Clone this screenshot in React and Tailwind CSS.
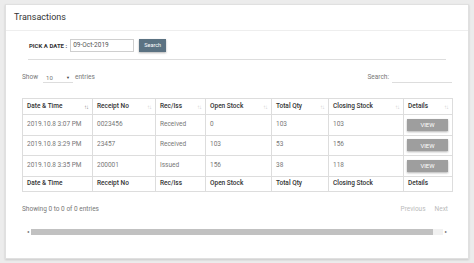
import React from "react";

const rows = [
  { dt: "2019.10.8 3:07 PM", rec: "0023456", type: "Received", open: "0", qty: "103", close: "103" },
  { dt: "2019.10.8 3:29 PM", rec: "23457", type: "Received", open: "103", qty: "53", close: "156" },
  { dt: "2019.10.8 3:35 PM", rec: "200001", type: "Issued", open: "156", qty: "38", close: "118" },
];

const cols = [
  { label: "Date & Time", w: "w-[70px]", sort: "active" },
  { label: "Receipt No", w: "w-[63px]" },
  { label: "Rec/Iss", w: "w-[50px]" },
  { label: "Open Stock", w: "w-[66px]" },
  { label: "Total Qty", w: "w-[57px]" },
  { label: "Closing Stock", w: "w-[75px]" },
  { label: "Details", w: "w-[49px]" },
];

const SortIcon = ({ active }) => (
  <span className={`text-[6px] leading-none tracking-[-1px] ${active ? "text-[#888]" : "text-[#ccc]"}`}>
    ↑↓
  </span>
);

export default function App() {
  return (
    <div
      className="w-[474px] h-[263px] bg-[#ececec] pt-[4px] pl-[5px] overflow-hidden"
      style={{ fontFamily: "Roboto, 'Liberation Sans', sans-serif" }}
    >
      <div className="w-[464px] h-[255px] bg-white border border-[#e0e0e0] shadow-[0_1px_2px_rgba(0,0,0,0.15)] flex flex-col">
        <div className="h-[26px] border-b border-[#eeeeee] flex items-center pl-[8px] text-[9px] text-[#333]">
          Transactions
        </div>

        <div className="mx-[22px] mt-[8px] pb-[7px] border-b border-[#dddddd] flex items-center pl-[1px]">
          <span className="text-[6px] font-bold text-[#333] mr-[3px]">PICK A DATE :</span>
          <div className="w-[64px] h-[13px] border border-[#cfcfcf] flex items-center px-[2px] text-[6.5px] text-[#555]">
            09-Oct-2019
          </div>
          <button className="ml-[5px] w-[27px] h-[13px] bg-[#5b7282] text-white text-[5.5px] flex items-center justify-center shadow-[0_1px_2px_rgba(0,0,0,0.3)]">
            Search
          </button>
        </div>

        <div className="flex items-center justify-between mx-[16px] mt-[13px] text-[6.5px] text-[#777]">
          <div className="flex items-center">
            <span>Show</span>
            <div className="ml-[5px] w-[30px] h-[10px] border-b border-[#ddd] flex items-center justify-between px-[3px] text-[6px]">
              <span>10</span>
              <span className="text-[4px] text-[#444]">▼</span>
            </div>
            <span className="ml-[2px]">entries</span>
          </div>
          <div className="flex items-center">
            <span>Search:</span>
            <div className="ml-[3px] w-[60px] h-[10px] border-b border-[#ddd]" />
          </div>
        </div>

        <table className="mx-[16px] mt-[15px] border-collapse text-[6.5px] text-[#777] w-[431px] table-fixed">
          <thead>
            <tr className="h-[16px]">
              {cols.map((c) => (
                <th key={c.label} className={`${c.w} border border-[#dddddd] px-[4px] text-left font-medium text-[#333]`}>
                  <div className="flex items-center justify-between">
                    <span>{c.label}</span>
                    <SortIcon active={c.sort === "active"} />
                  </div>
                </th>
              ))}
            </tr>
          </thead>
          <tbody>
            {rows.map((r) => (
              <tr key={r.rec} className="h-[20.5px]">
                <td className="border border-[#dddddd] px-[4px]">{r.dt}</td>
                <td className="border border-[#dddddd] px-[4px]">{r.rec}</td>
                <td className="border border-[#dddddd] px-[4px]">{r.type}</td>
                <td className="border border-[#dddddd] px-[4px]">{r.open}</td>
                <td className="border border-[#dddddd] px-[4px]">{r.qty}</td>
                <td className="border border-[#dddddd] px-[4px]">{r.close}</td>
                <td className="border border-[#dddddd] px-[3px]">
                  <button className="w-[41px] h-[12px] bg-[#9e9e9e] text-white text-[6px] flex items-center justify-center shadow-[0_1px_2px_rgba(0,0,0,0.3)]">
                    VIEW
                  </button>
                </td>
              </tr>
            ))}
          </tbody>
          <tfoot>
            <tr className="h-[15px]">
              {cols.map((c) => (
                <td key={c.label} className="border border-[#dddddd] px-[4px] font-medium text-[#333]">
                  {c.label}
                </td>
              ))}
            </tr>
          </tfoot>
        </table>

        <div className="flex items-center justify-between mx-[16px] mt-[13px] text-[6.5px] text-[#777]">
          <span>Showing 0 to 0 of 0 entries</span>
          <div className="flex gap-[9px] mr-[4px] text-[#bbb]">
            <span>Previous</span>
            <span>Next</span>
          </div>
        </div>

        <div className="mx-[19px] mt-[15px] h-[6px] flex items-center">
          <span className="w-[6px] text-[4px] text-[#555] flex justify-center">◂</span>
          <div className="flex-1 h-[6px] bg-[#c1c1c1]" />
          <span className="w-[10px] h-[6px] bg-[#f1f1f1]" />
          <span className="w-[6px] text-[4px] text-[#555] flex justify-center">▸</span>
        </div>
      </div>
    </div>
  );
}
